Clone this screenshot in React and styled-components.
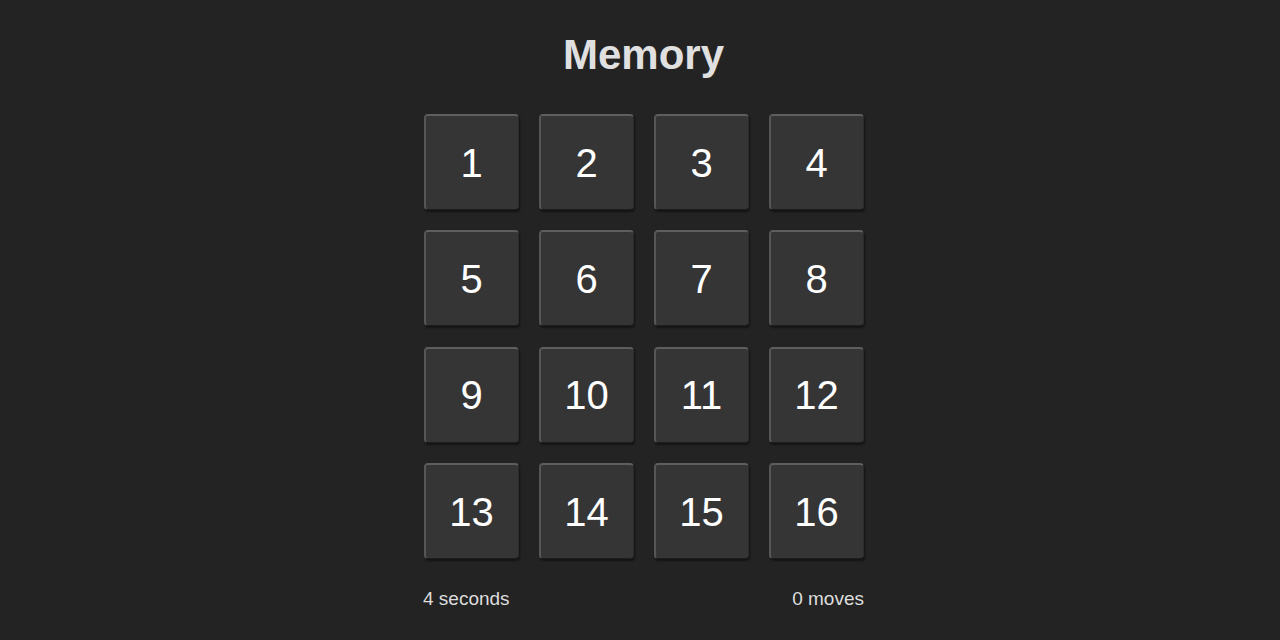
import React from "react";
import styled, { createGlobalStyle } from "styled-components";

const GlobalStyle = createGlobalStyle`
  html, body {
    margin: 0;
    padding: 0;
    background: #232323;
    font-family: "Liberation Sans", Arial, sans-serif;
  }
`;

const tiles = Array.from({ length: 16 }, (_, i) => i + 1);

const App = () => {
  return (
    <>
      <GlobalStyle />
      <Page>
        <Title>Memory</Title>
        <Board>
          {tiles.map((n) => (
            <Tile key={n}>{n}</Tile>
          ))}
        </Board>
        <Footer>
          <span>4 seconds</span>
          <span>0 moves</span>
        </Footer>
      </Page>
    </>
  );
};

export default App;

const Page = styled.div`
  width: 441px;
  margin-left: calc(50% - 217px);
  padding-top: 30px;
  display: flex;
  flex-direction: column;
  align-items: center;
`;

const Title = styled.h1`
  margin: 0;
  color: #e0e0e0;
  font-size: 42px;
  font-weight: 700;
  line-height: 50px;
`;

const Board = styled.div`
  margin-top: 34px;
  display: grid;
  grid-template-columns: repeat(4, 95px);
  grid-auto-rows: 96px;
  column-gap: 20px;
  row-gap: 20.4px;
`;

const Tile = styled.div`
  box-sizing: border-box;
  display: flex;
  align-items: center;
  justify-content: center;
  padding-top: 1px;
  background: #353535;
  border-radius: 4px;
  border-top: 2px solid #5e5e5e;
  border-left: 2px solid #565656;
  border-right: 1px solid #2c2c2c;
  border-bottom: 1px solid #1e1e1e;
  box-shadow: 1px 2px 2px rgba(0, 0, 0, 0.45);
  color: #fff;
  font-size: 40px;
  cursor: pointer;
`;

const Footer = styled.div`
  width: 100%;
  margin-top: 28px;
  display: flex;
  justify-content: space-between;
  color: #dedede;
  font-size: 19px;
  line-height: 23px;
`;
